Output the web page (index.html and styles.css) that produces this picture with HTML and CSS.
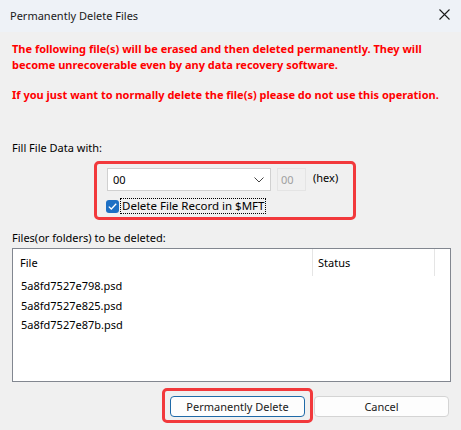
FILE: index.html
```html
<!DOCTYPE html>
<html>
<head>
<meta charset="utf-8">
<link rel="stylesheet" href="styles.css">
</head>
<body>
<div class="window">
  <div class="titlebar">
    <span class="title">Permanently Delete Files</span>
    <svg class="close" width="11" height="11" viewBox="0 0 11 11"><path d="M0.5 0.5L10.5 10.5M10.5 0.5L0.5 10.5" stroke="#1a1a1a" stroke-width="1.1" fill="none"/></svg>
  </div>
  <div class="content">
    <p class="warn first">The following file(s) will be erased and then deleted permanently. They will become unrecoverable even by any data recovery software.</p>
    <p class="warn second">If you just want to normally delete the file(s) please do not use this operation.</p>
    <div class="label fill-label">Fill File Data with:</div>
    <div class="highlight options">
      <div class="row">
        <div class="combo">
          <span>00</span>
          <svg class="chev" width="10" height="6" viewBox="0 0 10 6"><path d="M0.5 0.5L5 5L9.5 0.5" stroke="#444" stroke-width="1" fill="none"/></svg>
        </div>
        <div class="hexbox">00</div>
        <span class="hex">(hex)</span>
      </div>
      <div class="checkrow">
        <span class="checkbox"><svg width="9" height="7" viewBox="0 0 9 7"><path d="M0.8 3.6L3.3 6L8.2 0.8" stroke="#fff" stroke-width="1.3" fill="none"/></svg></span>
        <span class="checklabel">Delete File Record in $MFT</span>
      </div>
    </div>
    <div class="label files-label">Files(or folders) to be deleted:</div>
    <div class="list">
      <div class="list-head">
        <div class="col-file">File</div>
        <div class="col-status">Status</div>
        <div class="col-rest"></div>
      </div>
      <div class="item">5a8fd7527e798.psd</div>
      <div class="item">5a8fd7527e825.psd</div>
      <div class="item">5a8fd7527e87b.psd</div>
    </div>
    <div class="buttons">
      <div class="highlight btnwrap"><button class="btn default">Permanently Delete</button></div>
      <button class="btn cancel">Cancel</button>
    </div>
  </div>
</div>
</body>
</html>
```
FILE: styles.css
```css
* { box-sizing: border-box; }
html, body { margin: 0; padding: 0; background: #f0f0f0; }
body { font-family: "Noto Sans", "Open Sans", sans-serif; font-size: 11px; color: #000; }
.window { width: 461px; height: 430px; background: #f0f0f0; overflow: hidden; }
.titlebar { height: 32px; background: #eef2f7; display: flex; align-items: center; justify-content: space-between; padding: 0 11px 0 10px; }
.title { font-size: 11px; color: #1a1a1a; margin-top: -2px; }
.close { margin-top: -4px; }
.content { padding: 0 11px 0 12px; }
.warn { margin: 0; color: #f00; font-weight: bold; line-height: 16px; font-size: 11px; }
.warn.first { margin-top: 9px; }
.warn.second { margin-top: 14px; }
.label { line-height: 16px; }
.fill-label { margin-top: 37px; }
.highlight { border: 3px solid #f2393c; border-radius: 5px; }
.options { margin: 5px 0 0 82px; width: 262px; height: 59px; padding: 4px 0 0 10px; }
.row { display: flex; align-items: center; }
.combo { width: 164px; height: 23px; background: #fff; border: 1px solid #d0d0d0; display: flex; align-items: center; justify-content: space-between; padding: 0 6px 0 5px; }
.hexbox { width: 29px; height: 23px; margin-left: 6px; background: #f0f0f0; border: 1px solid #e4e4e4; color: #a0a0a0; padding-left: 3px; line-height: 21px; }
.hex { margin-left: 7px; margin-top: -5px; }
.checkrow { display: flex; align-items: center; margin-top: 8px; }
.checkbox { width: 13px; height: 13px; background: #1d6fc4; border-radius: 3px; display: flex; align-items: center; justify-content: center; margin-left: -1px; }
.checklabel { margin-left: 2px; outline: 1px dotted #000; line-height: 14px; padding: 0 1px; font-size: 11.5px; }
.files-label { margin-top: 10px; }
.list { margin-top: 2px; width: 439px; height: 134px; background: #fff; border: 1px solid #828790; }
.list-head { display: flex; height: 27px; }
.list-head > div { padding-left: 7px; line-height: 27px; border-right: 1px solid #e5e5e5; }
.col-file { width: 300px; }
.col-status { width: 122px; padding-left: 5px !important; }
.col-rest { flex: 1; border-right: none !important; }
.item { padding-left: 8px; line-height: 19.5px; }
.buttons { display: flex; justify-content: flex-end; align-items: flex-start; margin-top: 6px; padding-right: 1px; }
.btnwrap { padding: 5px 5px 3px 5px; margin-right: 1px; }
.btn { font-family: inherit; font-size: 11px; height: 21px; border-radius: 4px; padding: 0; background: #fdfdfd; color: #1a1a1a; }
.btn.default { width: 135px; border: 1px solid #1f6aa8; }
.cancel { width: 135px; border: 1px solid #d4d4d4; margin-top: 8px; }
```
